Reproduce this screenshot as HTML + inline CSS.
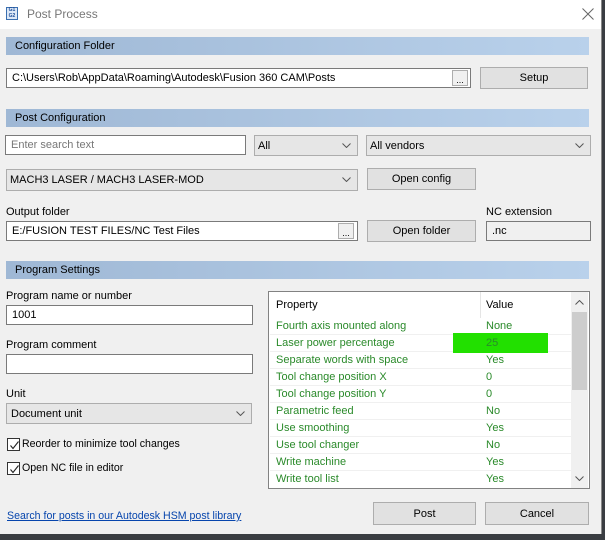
<!DOCTYPE html><html><head><style>
*{box-sizing:border-box;margin:0;padding:0}
body{width:605px;height:540px;background:#3a3d42;font-family:"Liberation Sans",sans-serif;font-size:11px;color:#000;position:relative;overflow:hidden}
.win{position:absolute;left:0;top:0;width:602px;height:534px;background:#f0f0f0;border-right:1px solid #888}
.a{position:absolute}
.title{left:0;top:0;width:601px;height:29px;background:#fff}
.hdr{height:18px;background:linear-gradient(90deg,#9fb8d5,#b9d1eb);padding-left:9px;line-height:18px;font-size:11px;color:#000}
.inp{background:#fff;border:1px solid #7a7a7a;padding-left:5px;white-space:nowrap;overflow:hidden;display:flex;align-items:center}
.btn{background:#e1e1e1;border:1px solid #adadad;display:flex;align-items:center;justify-content:center}
.sel{background:#e6e6e6;border:1px solid #adadad;padding-left:3px;display:flex;align-items:center}
.chev{position:absolute;right:6px;top:50%;margin-top:-3px;width:9px;height:5px}
.dots{position:absolute;background:#f0f0f0;border:1px solid #adadad;width:16px;height:16px;font-size:9px;text-align:center;line-height:18px}
.row{position:absolute;left:1px;width:302px;height:17px;border-bottom:1px solid #f0f0f0;color:#2a8a2a;line-height:17px}
.row span{position:absolute}
.cb{position:absolute;width:13px;height:13px;border:1px solid #333;background:#fff}
.cb svg{position:absolute;left:1px;top:1px}
</style></head><body><div class="win">
<div class="a title"></div>
<div class="a" style="left:6px;top:7px;width:12px;height:13px;border:1px solid #3a6fb0;background:#dce8f7;font-size:5px;line-height:5.5px;color:#1f4f9a;text-align:center;font-weight:bold">G1<br>G2</div>
<div class="a" style="left:27px;top:7px;font-size:12px;color:#777">Post Process</div>
<svg class="a" style="left:582px;top:8px" width="12" height="12"><path d="M0.5 0.5L11.5 11.5M11.5 0.5L0.5 11.5" stroke="#666" stroke-width="1"/></svg>

<div class="a hdr" style="left:6px;top:37px;width:583px">Configuration Folder</div>
<div class="a inp" style="left:6px;top:68px;width:465px;height:20px">C:\Users\Rob\AppData\Roaming\Autodesk\Fusion 360 CAM\Posts</div>
<div class="dots" style="left:452px;top:70px">...</div>
<div class="a btn" style="left:480px;top:67px;width:108px;height:22px">Setup</div>

<div class="a hdr" style="left:6px;top:109px;width:583px">Post Configuration</div>
<div class="a inp" style="left:5px;top:135px;width:241px;height:20px;color:#777">Enter search text</div>
<div class="a sel" style="left:254px;top:135px;width:104px;height:21px">All<svg class="chev" viewBox="0 0 9 5"><path d="M0.5 0.5L4.5 4.5L8.5 0.5" fill="none" stroke="#555"/></svg></div>
<div class="a sel" style="left:366px;top:135px;width:225px;height:21px">All vendors<svg class="chev" viewBox="0 0 9 5"><path d="M0.5 0.5L4.5 4.5L8.5 0.5" fill="none" stroke="#555"/></svg></div>
<div class="a sel" style="left:6px;top:169px;width:352px;height:22px">MACH3 LASER / MACH3 LASER-MOD<svg class="chev" viewBox="0 0 9 5"><path d="M0.5 0.5L4.5 4.5L8.5 0.5" fill="none" stroke="#555"/></svg></div>
<div class="a btn" style="left:367px;top:168px;width:109px;height:22px">Open config</div>

<div class="a" style="left:6px;top:206px">Output folder</div>
<div class="a inp" style="left:6px;top:221px;width:352px;height:20px">E:/FUSION TEST FILES/NC Test Files</div>
<div class="dots" style="left:338px;top:223px">...</div>
<div class="a btn" style="left:367px;top:220px;width:109px;height:22px">Open folder</div>
<div class="a" style="left:486px;top:206px">NC extension</div>
<div class="a inp" style="left:486px;top:221px;width:105px;height:20px;background:#f0f0f0">.nc</div>

<div class="a hdr" style="left:6px;top:261px;width:583px">Program Settings</div>
<div class="a" style="left:6px;top:290px">Program name or number</div>
<div class="a inp" style="left:6px;top:305px;width:247px;height:20px">1001</div>
<div class="a" style="left:6px;top:339px">Program comment</div>
<div class="a inp" style="left:6px;top:354px;width:247px;height:20px"></div>
<div class="a" style="left:6px;top:388px">Unit</div>
<div class="a sel" style="left:6px;top:403px;width:246px;height:21px;padding-left:4px">Document unit<svg class="chev" viewBox="0 0 9 5"><path d="M0.5 0.5L4.5 4.5L8.5 0.5" fill="none" stroke="#555"/></svg></div>
<div class="cb" style="left:7px;top:438px"><svg width="11" height="11"><path d="M1.5 5.5L4 8.5L9.5 1.5" fill="none" stroke="#222" stroke-width="1.1"/></svg></div>
<div class="a" style="left:22px;top:438px;font-size:10.6px">Reorder to minimize tool changes</div>
<div class="cb" style="left:7px;top:462px"><svg width="11" height="11"><path d="M1.5 5.5L4 8.5L9.5 1.5" fill="none" stroke="#222" stroke-width="1.1"/></svg></div>
<div class="a" style="left:22px;top:462px;font-size:10.6px">Open NC file in editor</div>
<div class="a" style="left:7px;top:510px;color:#0645ad;text-decoration:underline;font-size:10.6px">Search for posts in our Autodesk HSM post library</div>

<div class="a" style="left:268px;top:291px;width:322px;height:198px;background:#fff;border:1px solid #828282">
 <div class="a" style="left:7px;top:7px">Property</div>
 <div class="a" style="left:211px;top:0;width:1px;height:26px;background:#e5e5e5"></div>
 <div class="a" style="left:217px;top:7px">Value</div>
 <div class="row" style="top:26px"><span style="left:6px">Fourth axis mounted along</span><span style="left:216px">None</span></div>
 <div class="row" style="top:43px"><span style="left:6px">Laser power percentage</span></div>
 <div class="a" style="left:184px;top:41px;width:95px;height:20px;background:#22e000"></div>
 <div class="a" style="left:217px;top:45px;color:#2a8a2a">25</div>
 <div class="row" style="top:60px"><span style="left:6px">Separate words with space</span><span style="left:216px">Yes</span></div>
 <div class="row" style="top:77px"><span style="left:6px">Tool change position X</span><span style="left:216px">0</span></div>
 <div class="row" style="top:94px"><span style="left:6px">Tool change position Y</span><span style="left:216px">0</span></div>
 <div class="row" style="top:111px"><span style="left:6px">Parametric feed</span><span style="left:216px">No</span></div>
 <div class="row" style="top:128px"><span style="left:6px">Use smoothing</span><span style="left:216px">Yes</span></div>
 <div class="row" style="top:145px"><span style="left:6px">Use tool changer</span><span style="left:216px">No</span></div>
 <div class="row" style="top:162px"><span style="left:6px">Write machine</span><span style="left:216px">Yes</span></div>
 <div class="row" style="top:179px;border:0"><span style="left:6px">Write tool list</span><span style="left:216px">Yes</span></div>
 <div class="a" style="left:302px;top:0;width:17px;height:196px;background:#f0f0f0"></div>
 <div class="a" style="left:303px;top:20px;width:15px;height:78px;background:#cdcdcd"></div>
 <svg class="a" style="left:306px;top:8px" width="9" height="5"><path d="M0.5 4.5L4.5 0.5L8.5 4.5" fill="none" stroke="#555"/></svg>
 <svg class="a" style="left:306px;top:184px" width="9" height="5"><path d="M0.5 0.5L4.5 4.5L8.5 0.5" fill="none" stroke="#555"/></svg>
</div>

<div class="a btn" style="left:373px;top:502px;width:103px;height:23px">Post</div>
<div class="a btn" style="left:485px;top:502px;width:104px;height:23px">Cancel</div>
</div></body></html>
